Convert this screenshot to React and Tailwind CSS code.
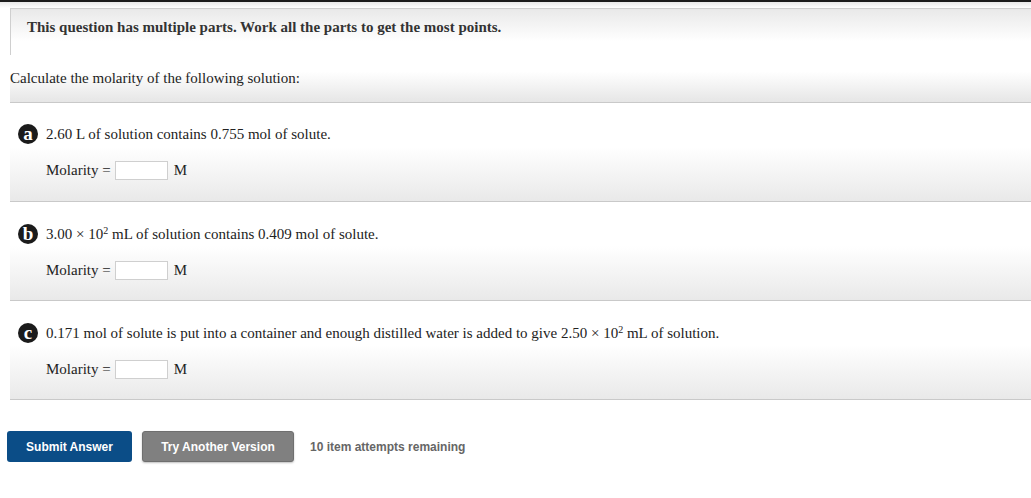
import React from "react";

const serif = { fontFamily: '"Liberation Serif", "Times New Roman", serif' };

function Badge({ letter }) {
  return (
    <span className="flex h-[20px] w-[20px] shrink-0 items-center justify-center rounded-full bg-[#1b1b1b] text-[19px] font-bold leading-none text-white">
      <span className="-mt-[2px]">{letter}</span>
    </span>
  );
}

function Molarity() {
  return (
    <div className="flex h-[20px] items-center text-[15px] text-[#222]">
      <span>Molarity =</span>
      <span className="ml-[4px] h-[19px] w-[53px] border border-[#cfcfcf] bg-white" />
      <span className="ml-[6px]">M</span>
    </div>
  );
}

function Part({ letter, pt, children }) {
  return (
    <div className="h-[99px] border-b border-[#c9c9c9] bg-linear-to-b from-white from-45% to-[#e9e9e9]">
      <div className="pl-[8px]" style={{ paddingTop: pt }}>
        <div className="flex h-[20px] items-center gap-[8px] text-[15px] text-[#222]">
          <Badge letter={letter} />
          <span>{children}</span>
        </div>
        <div className="mt-[16px] pl-[28px]">
          <Molarity />
        </div>
      </div>
    </div>
  );
}

function Sci({ a, e }) {
  return (
    <>
      {a} <span className="text-[15px]">×</span> 10<sup className="text-[10px]">{e}</sup>
    </>
  );
}

export default function App() {
  return (
    <div className="h-[498px] w-[1031px] overflow-hidden bg-white" style={serif}>
      <div className="h-[2px] bg-[#1c1c1c]" />
      <div className="h-[6px] bg-linear-to-b from-[#e9e9e9] to-white" />
      <div className="ml-[10px]">
        <div className="h-[47px] border-l border-t border-[#cfcfcf] bg-linear-to-b from-[#e9e9e9] to-white to-70% pl-[16px] pt-[7px] text-[15px] font-bold text-[#333]">
          This question has multiple parts. Work all the parts to get the most points.
        </div>
        <div className="flex h-[48px] items-center border-b border-[#c9c9c9] bg-linear-to-b from-white from-35% to-[#e6e6e6] text-[15px] text-[#222]">
          Calculate the molarity of the following solution:
        </div>
        <Part letter="a" pt={21}>2.60 L of solution contains 0.755 mol of solute.</Part>
        <Part letter="b" pt={22}>
          <Sci a="3.00" e="2" /> mL of solution contains 0.409 mol of solute.
        </Part>
        <Part letter="c" pt={22}>
          0.171 mol of solute is put into a container and enough distilled water is added to give{" "}
          <Sci a="2.50" e="2" /> mL of solution.
        </Part>
      </div>
      <div
        className="mt-[31px] flex items-center pl-[7px]"
        style={{ fontFamily: '"Liberation Sans", Arial, sans-serif' }}
      >
        <button className="h-[31px] w-[125px] rounded-[3px] bg-[#0b4d87] text-[12px] font-bold text-white">
          Submit Answer
        </button>
        <button className="ml-[10px] h-[31px] w-[152px] rounded-[3px] border border-[#6f6f6f] bg-[#808080] text-[12px] font-bold text-white shadow-[0_1px_2px_rgba(0,0,0,0.25)]">
          Try Another Version
        </button>
        <span className="ml-[16px] text-[12px] font-bold text-[#666]">10 item attempts remaining</span>
      </div>
    </div>
  );
}
